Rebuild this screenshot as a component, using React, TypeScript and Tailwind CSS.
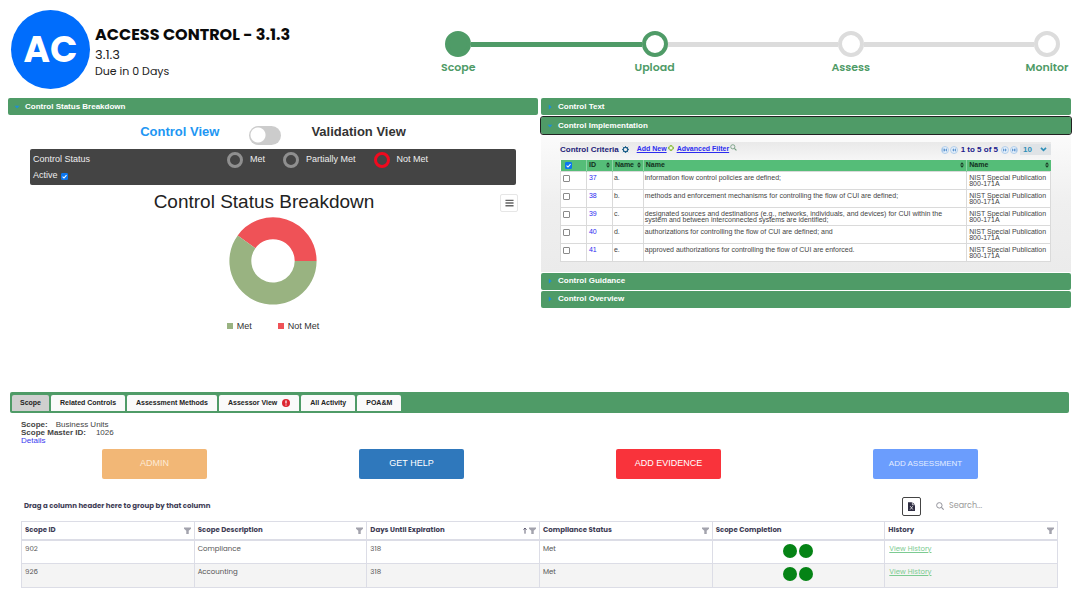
import React from "react";

const poppins = "font-['Poppins','Inter',sans-serif]";

const steps = [
  { label: "Scope", state: "done" },
  { label: "Upload", state: "current" },
  { label: "Assess", state: "todo" },
  { label: "Monitor", state: "todo" },
];

const dotStyles: Record<string, string> = {
  done: "border-[#4f9b67] bg-[#4f9b67]",
  current: "border-[#4f9b67] bg-white",
  todo: "border-[#dcdcdc] bg-white",
};

function Stepper() {
  return (
    <ol className="flex w-[58.6%] items-start pt-[21px]">
      {steps.map((s, i) => (
        <React.Fragment key={s.label}>
          {i > 0 && (
            <li
              aria-hidden="true"
              className={`mt-[11px] h-[5px] flex-1 ${i === 1 ? "bg-[#4f9b67]" : "bg-[#dcdcdc]"}`}
            />
          )}
          <li className="flex w-[26px] flex-col items-center">
            <span className={`size-[26px] rounded-full border-4 ${dotStyles[s.state]}`} />
            <span className="mt-[2px] text-[11px] leading-4 font-semibold whitespace-nowrap text-[#4f9b67]">
              {s.label}
            </span>
          </li>
        </React.Fragment>
      ))}
    </ol>
  );
}

function Bar({ title, open = false, focused = false }: { title: string; open?: boolean; focused?: boolean }) {
  return (
    <button
      type="button"
      aria-expanded={open}
      className={`flex h-[17px] w-full items-center gap-[5px] rounded-xs bg-[#4f9b67] pl-[6px] text-left text-[8px] font-bold text-white ${
        focused ? "mt-px outline outline-[#222]" : ""
      }`}
    >
      <svg viewBox="0 0 6 6" className="size-[6px] fill-[#1e8fd6]">
        {open ? <path d="M0.6 1.8h4.8L3 4.6z" /> : <path d="M1.8 0.6v4.8l2.8-2.4z" />}
      </svg>
      {title}
    </button>
  );
}

function StatusRadio({ label, red = false }: { label: string; red?: boolean }) {
  return (
    <label className="flex items-center gap-[7px]">
      <input
        type="radio"
        name="status"
        defaultChecked={red}
        className={`size-4 appearance-none rounded-full border-[3px] ${red ? "border-[#f00a1e]" : "border-[#8f8f8f]"}`}
      />
      {label}
    </label>
  );
}

function Tick({ label, checked = false }: { label: string; checked?: boolean }) {
  return (
    <span className="relative block size-[7px]">
      <input
        type="checkbox"
        aria-label={label}
        defaultChecked={checked}
        className="block size-full appearance-none rounded-[1px] border border-[#8a8a8a] bg-white checked:border-[#0b76ef] checked:bg-[#0b76ef]"
      />
      {checked && (
        <svg viewBox="0 0 8 8" className="pointer-events-none absolute inset-0 size-full fill-none stroke-white">
          <path d="M1.8 4.2l1.6 1.6L6.3 2.4" strokeWidth="1.2" />
        </svg>
      )}
    </span>
  );
}

function BreakdownChart() {
  return (
    <figure className="relative pt-[6px]">
      <figcaption className="pr-[18px] text-center text-[19px] leading-[22px] text-[#222]">
        Control Status Breakdown
      </figcaption>
      <button
        type="button"
        aria-label="Chart menu"
        className="absolute top-[9px] right-[20px] flex size-[18px] items-center justify-center rounded-xs border border-[#e6e6e6] bg-white"
      >
        <svg viewBox="0 0 10 8" className="h-[8px] w-[9px] stroke-[#666]">
          <path d="M0.5 1h9M0.5 4h9M0.5 7h9" strokeWidth="1.5" />
        </svg>
      </button>
      <svg viewBox="-44 -44 88 88" className="mx-auto mt-1 block size-[88px]">
        <path d="M43.6 0A43.6 43.6 0 0 0 -35.3 -25.6L-17.6 -12.8A21.7 21.7 0 0 1 21.7 0Z" fill="#ef5257" />
        <path d="M43.6 0A43.6 43.6 0 1 1 -35.3 -25.6L-17.6 -12.8A21.7 21.7 0 1 0 21.7 0Z" fill="#99b381" />
      </svg>
      <ul className="mt-[15px] flex justify-center gap-[26px] text-[9px] leading-3 text-[#333]">
        <li className="flex items-center gap-1">
          <span className="size-[6px] bg-[#99b381]" />
          Met
        </li>
        <li className="flex items-center gap-1">
          <span className="size-[6px] bg-[#ef5257]" />
          Not Met
        </li>
      </ul>
    </figure>
  );
}

function SortIcon() {
  return (
    <svg viewBox="0 0 6 8" className="h-[6px] w-[4px] shrink-0 fill-[#1d3a27]">
      <path d="M3 0l3 3.4H0zM3 8l3-3.4H0z" />
    </svg>
  );
}

const criteria = [
  ["37", "a.", "information flow control policies are defined;"],
  ["38", "b.", "methods and enforcement mechanisms for controlling the flow of CUI are defined;"],
  [
    "39",
    "c.",
    "designated sources and destinations (e.g., networks, individuals, and devices) for CUI within the system and between interconnected systems are identified;",
  ],
  ["40", "d.", "authorizations for controlling the flow of CUI are defined; and"],
  ["41", "e.", "approved authorizations for controlling the flow of CUI are enforced."],
];

function PagerButton({ label, back = false, end = false }: { label: string; back?: boolean; end?: boolean }) {
  return (
    <button type="button" aria-label={label} className="size-[8px] rounded-full border border-[#b4cfea] bg-[#e3effb]">
      <svg viewBox="0 0 8 8" className={`block size-full fill-[#5d95cf] ${back ? "" : "rotate-180"}`}>
        <path d="M4 1.8v4.4L1.6 4zM6.6 1.8v4.4L4.2 4z" />
        {end && <path d="M0.8 1.8h0.9v4.4h-0.9z" />}
      </svg>
    </button>
  );
}

function Criteria() {
  return (
    <div className="bg-linear-to-b from-[#fbfbfb] via-[#efefef] to-[#ebebeb] pt-[7px] pr-[20px] pb-[10px] pl-[19px]">
      <div className="flex h-[18px] items-center bg-linear-to-b from-[#e9e9e9] to-[#f6f6f6] pb-[3px] text-[7px]">
        <h2 className="text-[8px] font-bold text-[#1b1b78]">Control Criteria</h2>
        <svg viewBox="0 0 10 10" className="ml-[3px] size-[7px] fill-none stroke-[#1c5f8a]">
          <circle cx="5" cy="5" r="3.2" strokeWidth="1.8" />
          <path
            d="M5 0v2M5 8v2M0 5h2M8 5h2M1.2 1.2l1.5 1.5M7.3 7.3l1.5 1.5M8.8 1.2L7.3 2.7M2.7 7.3L1.2 8.8"
            strokeWidth="1.2"
          />
        </svg>
        <a href="#add" className="ml-[8px] font-bold text-[#2c2cf0] underline">
          Add New
        </a>
        <svg viewBox="0 0 10 10" className="mb-1 ml-px size-[6px] fill-white stroke-[#7fb62a]">
          <path d="M3.5 1h3v2.5H9v3H6.5V9h-3V6.5H1v-3h2.5z" strokeWidth="1.6" />
        </svg>
        <a href="#filter" className="ml-[3px] font-bold text-[#2c2cf0] underline">
          Advanced Filter
        </a>
        <svg viewBox="0 0 10 10" className="mb-1 ml-px size-[7px] fill-none stroke-[#6f9a7c]">
          <circle cx="4" cy="4" r="3" strokeWidth="1.2" />
          <path d="M6.2 6.2l3 3" strokeWidth="1.6" />
        </svg>
        <div className="ml-auto flex items-center gap-px">
          <PagerButton label="First page" back end />
          <PagerButton label="Previous page" back />
          <span className="px-[2px] text-[8px] font-bold text-[#1b1b8c]">1 to 5 of 5</span>
          <PagerButton label="Next page" />
          <PagerButton label="Last page" end />
          <span className="relative ml-px flex items-center">
            <select
              aria-label="Rows per page"
              defaultValue="10"
              className="h-[11px] w-[31px] appearance-none bg-[#dfe3e6] pl-[3px] text-[8px] font-bold text-[#2e8fb8]"
            >
              <option>10</option>
              <option>25</option>
            </select>
            <svg
              viewBox="0 0 8 6"
              className="pointer-events-none absolute right-1 h-[5px] w-[7px] fill-none stroke-[#2e8fb8]"
            >
              <path d="M1 1l3 3 3-3" strokeWidth="2" />
            </svg>
          </span>
        </div>
      </div>
      <table className="w-full table-fixed border-collapse bg-white text-[7px] leading-[6px] text-[#444]">
        <colgroup>
          <col className="w-[5.3%]" />
          <col className="w-[5.3%]" />
          <col className="w-[6.3%]" />
          <col />
          <col className="w-[17.1%]" />
        </colgroup>
        <thead className="bg-[#55bd78] text-left text-[#12301d]">
          <tr className="h-[11px]">
            <th className="pl-[4px]">
              <Tick label="Select all" checked />
            </th>
            {["ID", "Name", "Name", "Name"].map((h, i) => (
              <th key={i} className="border-l border-[#8fd3a5] px-[2px] font-bold">
                <span className="flex items-center justify-between">
                  {h}
                  <SortIcon />
                </span>
              </th>
            ))}
          </tr>
        </thead>
        <tbody>
          {criteria.map(([id, letter, text]) => (
            <tr key={id} className="h-[18px] align-top *:border *:border-[#dadada] *:pt-[3px]">
              <td className="pl-[2px]">
                <Tick label={`Select ${id}`} />
              </td>
              <td className="pl-[2px]">
                <a href={`#${id}`} className="text-[#2c2cf0]">
                  {id}
                </a>
              </td>
              <td className="pl-px">{letter}</td>
              <td className="pr-[12px] pl-px">{text}</td>
              <td className="pl-[2px] whitespace-nowrap">
                NIST Special Publication
                <br />
                800-171A
              </td>
            </tr>
          ))}
        </tbody>
      </table>
    </div>
  );
}

const tabs = ["Scope", "Related Controls", "Assessment Methods", "Assessor View", "All Activity", "POA&M"];

function Tabs() {
  return (
    <div role="tablist" className="flex h-[21px] gap-[2px] rounded-xs bg-[#4f9b67] pt-[3px] pl-[2px]">
      {tabs.map((t, i) => (
        <button
          key={t}
          type="button"
          role="tab"
          aria-selected={i === 0}
          className={`flex h-4 items-center gap-[5px] rounded-t-xs text-[7px] font-bold text-[#222] ${
            i === 0 ? "bg-[#cfcfcf] px-2" : "bg-[#fafafa] px-[9px]"
          }`}
        >
          {t}
          {t === "Assessor View" && (
            <svg viewBox="0 0 10 10" className="size-[8px]">
              <circle cx="5" cy="5" r="5" fill="#dc2430" />
              <path d="M5 2v3.6M5 6.8v1.3" stroke="#fff" strokeWidth="1.5" />
            </svg>
          )}
        </button>
      ))}
    </div>
  );
}

const actions = [
  { label: "ADMIN", style: "bg-[#f2b776] text-[9px] text-[#fdebd6]" },
  { label: "GET HELP", style: "bg-[#2f78bc] text-[9px] text-white" },
  { label: "ADD EVIDENCE", style: "bg-[#f9333b] text-[9px] text-white" },
  { label: "ADD ASSESSMENT", style: "bg-[#6b9dfd] text-[8px] text-[#e4edff]" },
];

function FilterIcon() {
  return (
    <svg viewBox="0 0 8 8" className="size-[7px] shrink-0 fill-[#a3a3ad]">
      <path d="M0 0.5h8v1.6L5.4 4.2V8H2.6V4.2L0 2.1z" />
    </svg>
  );
}

const gridColumns = [
  "Scope ID",
  "Scope Description",
  "Days Until Expiration",
  "Compliance Status",
  "Scope Completion",
  "History",
];

const scopes = [
  ["902", "Compliance", "318", "Met"],
  ["926", "Accounting", "318", "Met"],
];

function ScopeGrid() {
  return (
    <section className={`mt-3 mr-[11px] ml-[11px] ${poppins} text-[7px]`}>
      <div className="flex h-[30px] items-center">
        <p className="flex-1 pl-[3px] font-bold text-[#3d3b54]">Drag a column header here to group by that column</p>
        <button
          type="button"
          aria-label="Export"
          className="flex size-[19px] items-center justify-center rounded-xs border border-[#444]"
        >
          <svg viewBox="0 0 8 10" className="h-[9px] w-[7px]">
            <path d="M0 0h5l3 3v7H0z" fill="#2f2d42" />
            <path d="M5 0v3h3M2.4 4.5l3.2 4M5.6 4.5l-3.2 4" fill="none" stroke="#fff" strokeWidth="0.8" />
          </svg>
        </button>
        <label className="mr-[57px] ml-[15px] flex w-[65px] items-center gap-[5px]">
          <svg viewBox="0 0 10 10" className="size-[8px] shrink-0 fill-none stroke-[#8f8f98]">
            <circle cx="4.2" cy="4.2" r="3.4" strokeWidth="1.2" />
            <path d="M6.8 6.8l2.8 2.8" strokeWidth="1.3" />
          </svg>
          <input
            aria-label="Search"
            placeholder="Search..."
            className="w-full text-[8px] outline-none placeholder:text-[#9a9a9a]"
          />
        </label>
      </div>
      <table className="w-full table-fixed border-collapse border border-[#dcdde6] text-left">
        <thead>
          <tr className="h-[18px] border-b-2 border-[#dcdde6]">
            {gridColumns.map((c, i) => (
              <th key={c} className="border-x border-[#dcdde6] px-[3px] font-bold text-[#3d3b54]">
                <span className="flex items-center">
                  <span className="flex-1">{c}</span>
                  {i === 2 && (
                    <svg viewBox="0 0 5 8" className="mr-[2px] h-[7px] w-[4px] fill-none stroke-[#3d3b54]">
                      <path d="M2.5 8V1M0.5 3l2-2 2 2" />
                    </svg>
                  )}
                  {i !== 4 && <FilterIcon />}
                </span>
              </th>
            ))}
          </tr>
        </thead>
        <tbody className="text-[#555]">
          {scopes.map((row) => (
            <tr key={row[0]} className="h-6 border-b border-[#dcdde6] align-top even:bg-[#f4f4f4]">
              {row.map((v, i) => (
                <td key={i} className="border-x border-[#dcdde6] px-[3px] pt-[3px]">
                  {v}
                </td>
              ))}
              <td className="border-x border-[#dcdde6] pt-[3px]">
                <span className="flex justify-center gap-[2px]">
                  <span className="size-[14px] rounded-full bg-[#058315]" />
                  <span className="size-[14px] rounded-full bg-[#058315]" />
                </span>
              </td>
              <td className="border-x border-[#dcdde6] px-[4px] pt-[3px]">
                <a href="#history" className="text-[#7ccb92] underline">
                  View History
                </a>
              </td>
            </tr>
          ))}
        </tbody>
      </table>
    </section>
  );
}

export default function App() {
  return (
    <div className="min-h-screen bg-white font-['Liberation_Sans',Arial,sans-serif]">
      <header className={`flex justify-between pt-[10px] pr-[15px] pl-[11px] ${poppins}`}>
        <div className="flex gap-[5px]">
          <div className="flex size-[79px] items-center justify-center rounded-full bg-[#006dfc] text-[36px] font-bold text-white">
            AC
          </div>
          <div className="pt-[14px] text-[#222]">
            <h1 className="text-[16px] leading-[22px] font-bold text-[#0a0a0a]">ACCESS CONTROL - 3.1.3</h1>
            <p className="text-[13px] leading-[17px]">3.1.3</p>
            <p className="text-[11px] leading-4">Due in 0 Days</p>
          </div>
        </div>
        <Stepper />
      </header>

      <main>
        <div className="mt-[9px] grid min-h-[294px] grid-cols-2 gap-[3px] pr-1 pl-[8px]">
          <section>
            <Bar title="Control Status Breakdown" open />
            <div className="flex h-[34px] justify-center text-[13px] leading-[34px] font-bold text-[#333]">
              <span className="text-[#2196f3]">Control View</span>
              <input
                type="checkbox"
                role="switch"
                aria-label="Validation View"
                className="mx-[30px] mt-[11px] h-[19px] w-8 appearance-none rounded-full bg-[#ccc] bg-[radial-gradient(circle_at_9px_9px,white_7px,transparent_8px)]"
              />
              <span>Validation View</span>
            </div>
            <div className="mr-[22px] ml-[22px] flex h-[36px] flex-col rounded-xs bg-[#444] px-[3px] pt-[2px] text-[9px] text-[#eee]">
              <div className="flex h-[17px] items-center">
                <span className="w-[194px]">Control Status</span>
                <div className="flex gap-[18px]">
                  <StatusRadio label="Met" />
                  <StatusRadio label="Partially Met" />
                  <StatusRadio label="Not Met" red />
                </div>
              </div>
              <div className="flex h-4 items-center gap-[3px]">
                Active
                <Tick label="Active" checked />
              </div>
            </div>
            <BreakdownChart />
          </section>

          <section className="flex flex-col gap-px">
            <Bar title="Control Text" />
            <Bar title="Control Implementation" open focused />
            <Criteria />
            <Bar title="Control Guidance" />
            <Bar title="Control Overview" />
          </section>
        </div>

        <div className="mr-[6px] ml-[10px]">
          <Tabs />
          <div className="pt-2 pl-[11px] text-[8px] leading-[8px] text-[#444]">
            <p>
              <b>Scope:</b>
              <span className="ml-2">Business Units</span>
            </p>
            <p>
              <b>Scope Master ID:</b>
              <span className="ml-[10px]">1026</span>
            </p>
            <a href="#details" className="block text-[#3a3af0]">
              Details
            </a>
          </div>
          <div className="mt-1 mr-[15px] ml-[16px] grid grid-cols-4">
            {actions.map((a) => (
              <button key={a.label} type="button" className={`mx-auto h-[30px] w-[105px] rounded-xs ${a.style}`}>
                {a.label}
              </button>
            ))}
          </div>
          <ScopeGrid />
        </div>
      </main>
    </div>
  );
}
